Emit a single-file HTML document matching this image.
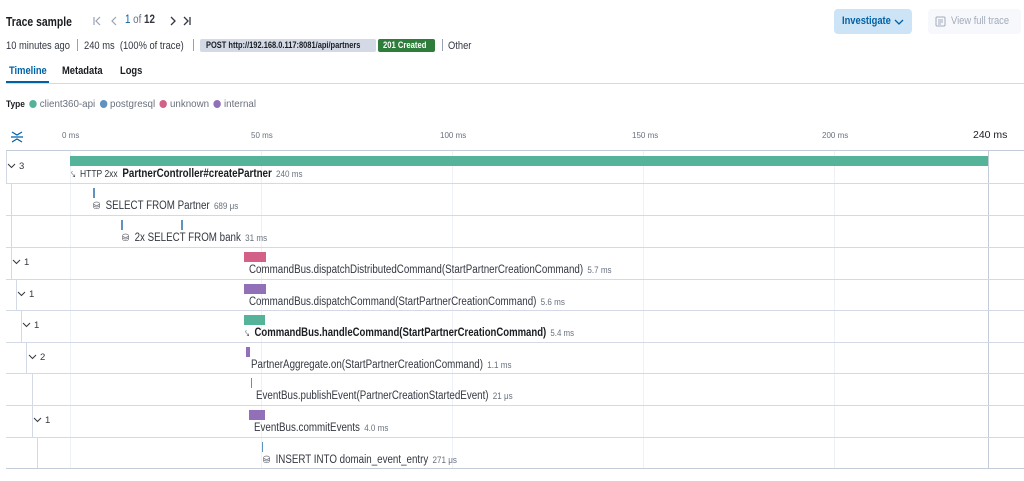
<!DOCTYPE html>
<html><head><meta charset="utf-8"><style>
*{margin:0;padding:0;box-sizing:border-box}
body{width:1024px;height:481px;background:#fff;font-family:"Liberation Sans",sans-serif;color:#343741;position:relative;overflow:hidden}
.a{position:absolute;white-space:nowrap}
.s{transform:scaleX(.85);transform-origin:0 50%}
.hl{position:absolute;height:1px;background:#d3dae6;left:6px;width:1018px}
.vl{position:absolute;width:1px;background:#d3dae6}
.g{position:absolute;width:1px;background:#eef1f6;top:151px;height:317px}
.bar{position:absolute;height:10px}
.lb{position:absolute;font-size:11.5px;white-space:nowrap;color:#343741;line-height:14px;transform:scaleX(.85);transform-origin:0 50%}
.lb small{font-size:9.5px;color:#69707d;margin-left:5px}
.tg{position:absolute;font-size:9.5px;color:#343741}
.tg svg{vertical-align:middle;margin-right:3px}
.dot{display:inline-block;width:8px;height:8px;border-radius:50%;margin:0 3px 0 5px;vertical-align:-1px}
</style></head><body>
<div class="a s" style="left:6px;top:14px;font-size:13px;font-weight:bold;color:#1a1c21;transform:scaleX(.8)">Trace sample</div>
<svg class="a" style="left:92px;top:15px" width="100" height="12">
<path d="M2 2v8M8 2l-4 4 4 4" stroke="#98a2b3" fill="none" stroke-width="1.2"/>
<path d="M24 2l-4 4 4 4" stroke="#98a2b3" fill="none" stroke-width="1.2"/>
<path d="M79 2l4 4-4 4" stroke="#343741" fill="none" stroke-width="1.3"/>
<path d="M92 2l4 4-4 4M98 2v8" stroke="#343741" fill="none" stroke-width="1.3"/>
</svg>
<div class="a s" style="left:125px;top:14px;font-size:11.5px;color:#69707d"><span style="color:#0061a6">1</span> of <b style="color:#343741">12</b></div>
<div class="a" style="left:834px;top:9px;width:78px;height:25px;background:#cce4f5;border-radius:4px;color:#0061a6"><span class="a s" style="left:8px;top:6px;font-size:11px;font-weight:bold">Investigate</span><svg class="a" style="left:60px;top:9px" width="10" height="8"><path d="M1 2l4 4 4-4" stroke="#0061a6" fill="none" stroke-width="1.3"/></svg></div>
<div class="a" style="left:928px;top:9px;width:93px;height:25px;background:#f7f8fc;border-radius:4px"><svg class="a" style="left:7px;top:7px" width="11" height="11"><rect x="1" y="1" width="9" height="9" rx="1" stroke="#a2abba" fill="none"/><path d="M3 4h5M3 6h5M3 8h3" stroke="#a2abba"/></svg><span class="a s" style="left:23px;top:6px;font-size:11px;color:#a2abba">View full trace</span></div>
<div class="a s" style="left:6px;top:40px;font-size:11px">10 minutes ago</div>
<div class="a" style="left:77px;top:39px;width:1px;height:12px;background:#98a2b3"></div>
<div class="a s" style="left:84px;top:40px;font-size:11px">240 ms &nbsp;(100% of trace)</div>
<div class="a" style="left:193px;top:39px;width:1px;height:12px;background:#98a2b3"></div>
<div class="a" style="left:200px;top:39px;width:176px;height:13px;background:#d3dae6;border-radius:2px"><span class="a s" style="left:6px;top:1px;font-size:9px;font-weight:bold;color:#1a1c21;line-height:11px;transform:scaleX(.83)">POST http://192.168.0.117:8081/api/partners</span></div>
<div class="a" style="left:378px;top:39px;width:57px;height:13px;background:#2f7d3a;border-radius:2px"><span class="a s" style="left:5px;top:1px;font-size:9px;font-weight:bold;color:#fff;line-height:11px">201 Created</span></div>
<div class="a" style="left:442px;top:39px;width:1px;height:12px;background:#98a2b3"></div>
<div class="a s" style="left:448px;top:40px;font-size:11px">Other</div>
<div class="a s" style="left:9px;top:65px;font-size:11px;font-weight:bold;color:#0061a6">Timeline</div>
<div class="a" style="left:6px;top:81px;width:43px;height:2px;background:#0061a6"></div>
<div class="a s" style="left:62px;top:65px;font-size:11px;font-weight:bold;color:#1a1c21">Metadata</div>
<div class="a s" style="left:120px;top:65px;font-size:11px;font-weight:bold;color:#1a1c21">Logs</div>
<div class="a" style="left:6px;top:83px;width:1018px;height:1px;background:#d3dae6"></div>
<div class="a" style="left:6px;top:98px;font-size:10.5px;color:#69707d;transform:scaleX(.93);transform-origin:0 50%"><b style="color:#1a1c21;font-size:9px">Type</b><span class="dot" style="background:#54b399"></span>client360-api<span class="dot" style="background:#6092c0"></span>postgresql<span class="dot" style="background:#d36086"></span>unknown<span class="dot" style="background:#9170b8"></span>internal</div>
<svg class="a" style="left:10px;top:131px" width="14" height="12"><path d="M2 1l5 3 5-3M2 11l5-3 5 3M1 6h12" stroke="#0061a6" fill="none" stroke-width="1.2"/></svg>
<div class="a" style="left:62px;top:131px;font-size:8px;color:#69707d">0 ms</div>
<div class="a" style="left:251px;top:131px;font-size:8px;color:#69707d">50 ms</div>
<div class="a" style="left:440px;top:131px;font-size:8px;color:#69707d">100 ms</div>
<div class="a" style="left:632px;top:131px;font-size:8px;color:#69707d">150 ms</div>
<div class="a" style="left:822px;top:131px;font-size:8px;color:#69707d">200 ms</div>
<div class="a" style="left:973px;top:129px;font-size:10.5px;color:#1a1c21">240 ms</div>
<div class="g" style="left:70px"></div><div class="g" style="left:261px"></div><div class="g" style="left:452px"></div><div class="g" style="left:643px"></div><div class="g" style="left:834px"></div>
<div class="vl" style="left:988px;top:151px;height:317px;background:#c5ccd9"></div>
<div class="hl" style="top:150px;background:#c5ccd9"></div>
<div class="hl" style="top:183px"></div><div class="hl" style="top:215px"></div><div class="hl" style="top:247px"></div><div class="hl" style="top:279px"></div><div class="hl" style="top:310px"></div><div class="hl" style="top:342px"></div><div class="hl" style="top:373px"></div><div class="hl" style="top:405px"></div><div class="hl" style="top:437px"></div><div class="hl" style="top:468px;background:#c5ccd9"></div>
<div class="vl" style="left:6px;top:151px;height:32px"></div>
<div class="vl" style="left:11px;top:183px;height:96px"></div>
<div class="vl" style="left:16px;top:279px;height:31px"></div>
<div class="vl" style="left:21px;top:310px;height:32px"></div>
<div class="vl" style="left:26px;top:342px;height:31px"></div>
<div class="vl" style="left:32px;top:373px;height:64px"></div>
<div class="vl" style="left:37px;top:437px;height:31px"></div>
<div class="tg" style="left:7px;top:161px"><svg width="9" height="6"><path d="M1 1l3.5 3.5L8 1" stroke="#343741" fill="none"/></svg>3</div>
<div class="tg" style="left:12px;top:257px"><svg width="9" height="6"><path d="M1 1l3.5 3.5L8 1" stroke="#343741" fill="none"/></svg>1</div>
<div class="tg" style="left:17px;top:289px"><svg width="9" height="6"><path d="M1 1l3.5 3.5L8 1" stroke="#343741" fill="none"/></svg>1</div>
<div class="tg" style="left:22px;top:320px"><svg width="9" height="6"><path d="M1 1l3.5 3.5L8 1" stroke="#343741" fill="none"/></svg>1</div>
<div class="tg" style="left:28px;top:352px"><svg width="9" height="6"><path d="M1 1l3.5 3.5L8 1" stroke="#343741" fill="none"/></svg>2</div>
<div class="tg" style="left:33px;top:415px"><svg width="9" height="6"><path d="M1 1l3.5 3.5L8 1" stroke="#343741" fill="none"/></svg>1</div>
<div class="bar" style="left:70px;top:156px;width:918px;background:#54b399"></div>
<div class="lb" style="left:71px;top:167px;font-size:10px"><span style="font-size:9px">⤥</span> &nbsp;HTTP 2xx &nbsp;<b style="font-size:11.5px;color:#1a1c21">PartnerController#createPartner</b><small>240 ms</small></div>
<div class="bar" style="left:93px;top:188px;width:2px;background:#6092c0"></div>
<div class="lb" style="left:93px;top:199px"><span style="font-size:10px">⛁</span> &nbsp;SELECT FROM Partner<small>689 μs</small></div>
<div class="bar" style="left:121px;top:220px;width:2px;background:#6092c0"></div>
<div class="bar" style="left:181px;top:220px;width:2px;background:#6092c0"></div>
<div class="lb" style="left:122px;top:231px"><span style="font-size:10px">⛁</span> &nbsp;2x SELECT FROM bank<small>31 ms</small></div>
<div class="bar" style="left:244px;top:252px;width:22px;background:#d36086"></div>
<div class="lb" style="left:249px;top:263px">CommandBus.dispatchDistributedCommand(StartPartnerCreationCommand)<small>5.7 ms</small></div>
<div class="bar" style="left:244px;top:284px;width:22px;background:#9170b8"></div>
<div class="lb" style="left:249px;top:295px">CommandBus.dispatchCommand(StartPartnerCreationCommand)<small>5.6 ms</small></div>
<div class="bar" style="left:244px;top:315px;width:21px;background:#54b399"></div>
<div class="lb" style="left:245px;top:326px;transform:scaleX(.83)"><span style="font-size:9px">⤥</span> &nbsp;<b style="color:#1a1c21">CommandBus.handleCommand(StartPartnerCreationCommand)</b><small>5.4 ms</small></div>
<div class="bar" style="left:246px;top:347px;width:4px;background:#9170b8"></div>
<div class="lb" style="left:251px;top:358px">PartnerAggregate.on(StartPartnerCreationCommand)<small>1.1 ms</small></div>
<div class="bar" style="left:251px;top:378px;width:1px;background:#d36086"></div>
<div class="lb" style="left:256px;top:389px">EventBus.publishEvent(PartnerCreationStartedEvent)<small>21 μs</small></div>
<div class="bar" style="left:249px;top:410px;width:16px;background:#9170b8"></div>
<div class="lb" style="left:254px;top:421px">EventBus.commitEvents<small>4.0 ms</small></div>
<div class="bar" style="left:262px;top:442px;width:1px;background:#6092c0"></div>
<div class="lb" style="left:263px;top:453px"><span style="font-size:10px">⛁</span> &nbsp;INSERT INTO domain_event_entry<small>271 μs</small></div>
</body></html>
